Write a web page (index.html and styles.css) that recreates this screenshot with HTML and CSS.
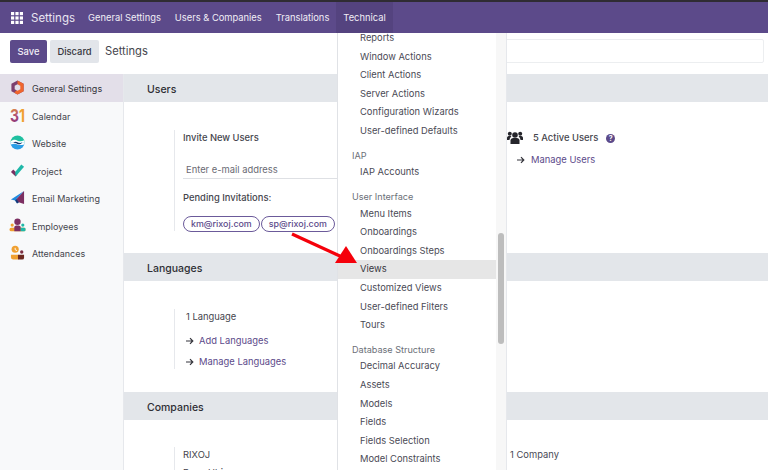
FILE: index.html
```html
<!DOCTYPE html>
<html lang="en">
<head>
<meta charset="utf-8">
<title>Settings</title>
<link rel="stylesheet" href="styles.css">
</head>
<body>
<div class="topstrip"></div>
<header class="navbar">
  <svg class="apps" viewBox="0 0 12 12" width="12" height="12"><g fill="#fff"><rect width="3.2" height="3.2"/><rect x="4.4" width="3.2" height="3.2"/><rect x="8.8" width="3.2" height="3.2"/><rect y="4.4" width="3.2" height="3.2"/><rect x="4.4" y="4.4" width="3.2" height="3.2"/><rect x="8.8" y="4.4" width="3.2" height="3.2"/><rect y="8.8" width="3.2" height="3.2"/><rect x="4.4" y="8.8" width="3.2" height="3.2"/><rect x="8.8" y="8.8" width="3.2" height="3.2"/></g></svg>
  <span class="brand">Settings</span>
  <nav class="menu">
    <span class="menu-item">General Settings</span>
    <span class="menu-item">Users &amp; Companies</span>
    <span class="menu-item">Translations</span>
    <span class="menu-item active">Technical</span>
  </nav>
</header>
<div class="control">
  <button class="btn primary">Save</button>
  <button class="btn secondary">Discard</button>
  <span class="crumb">Settings</span>
  <div class="search"></div>
</div>
<div class="main">
  <aside class="side">
    <div class="app selected"><svg class="ico" viewBox="0 0 16 16"><path fill="#7c3f6e" d="M8 .5 14.5 4v8L8 15.5 1.500 12V4z"/><path fill="#f0652d" d="M8 .5 14.500 4v8L8 15.500 4.500 13.600 7 10.800 10.500 9.800V6L8 4.500z"/><path fill="#e3dfe9" d="M8 4.500 11 6.200v3.600L8 11.500 5 9.800V6.200z"/></svg><span>General Settings</span></div>
    <div class="app"><svg class="ico" viewBox="0 0 16 16"><defs><linearGradient id="cg" x1="0" y1="0" x2="0" y2="1"><stop offset="0" stop-color="#f0a030"/><stop offset=".55" stop-color="#a8477a"/><stop offset="1" stop-color="#7c2f72"/></linearGradient></defs><text x="0" y="15" class="cal" textLength="16" lengthAdjust="spacingAndGlyphs"><tspan class="three">3</tspan><tspan class="one">1</tspan></text></svg><span>Calendar</span></div>
    <div class="app"><svg class="ico" viewBox="0 0 16 16"><path fill="#1fc0a0" d="M.5 8a7.500 7.500 0 0 1 15 0z"/><path fill="#2a9ee6" d="M.5 8a7.500 7.500 0 0 0 15 0z"/><path fill="#fff" d="M1 6.500c3-1.800 5-1.500 7-.5s4.500 1 7-.3L15.500 8h-15z"/><path fill="#fff" d="M.5 8h15l-.5 2c-3 1-5 1-7 0s-4-1-7 .2z"/><path fill="#17396e" d="M3.500 8c1.800-1.300 3.500-1 5 0 1.300.9 2.700.9 4.500-.3-.8 2-3.200 2.800-5 1.800S4.800 8.200 3.500 8z"/></svg><span>Website</span></div>
    <div class="app"><svg class="ico" viewBox="0 0 16 16"><path fill="#7c2f62" d="M1 9.500 3.500 7 8 11.500 6 14.500z"/><path fill="#1fb8a8" d="M6 14.500 5.500 9.500 12 1.500 15 4z"/></svg><span>Project</span></div>
    <div class="app"><svg class="ico" viewBox="0 0 16 16"><path fill="#1f8ae0" d="M1 10 15 1 7 9.500 7.500 14 5.500 11.300z"/><path fill="#7c2f62" d="M15 1 15 15 7.500 12.500 7 9.500z"/><path fill="#173a78" d="M7 9.500 9.500 13.200 7.500 14.500 5.500 11.300z"/></svg><span>Email Marketing</span></div>
    <div class="app"><svg class="ico wide" viewBox="0 0 16 16"><circle cx="8" cy="4.500" r="3" fill="#7c2f62"/><circle cx="3" cy="7.600" r="1.500" fill="#f0a030"/><circle cx="13" cy="7.600" r="1.500" fill="#1fb8a8"/><rect x=".5" y="10" width="15" height="3.500" rx="1.500" fill="#f0a030"/><path fill="#7c2f62" d="M5 13.500v-4c0-1 1-1.500 3-1.500s3 .5 3 1.500v4z"/><path fill="#1fb8a8" d="M11 10h3.500a1 1 0 0 1 1 1v1.500a1 1 0 0 1-1 1H11z"/></svg><span>Employees</span></div>
    <div class="app"><svg class="ico" viewBox="0 0 16 16"><circle cx="5.500" cy="4.500" r="3.800" fill="#f0a030"/><path d="M5.500 3v2l2 1" stroke="#fff" stroke-width="1" fill="none"/><circle cx="12.500" cy="7.500" r="1.800" fill="#7c2f42"/><path fill="#f0a030" d="M1 10.500h8v5H3.500A2.500 2.500 0 0 1 1 13z"/><path fill="#6d2a20" d="M8.500 10.500H15v3a2 2 0 0 1-2 2H8.500z"/></svg><span>Attendances</span></div>
  </aside>
  <section class="content">
    <h2 class="band">Users</h2>
    <div class="pane users">
      <div class="box">
        <div class="strong">Invite New Users</div>
        <div class="input">Enter e-mail address</div>
        <div class="strong pending">Pending Invitations:</div>
        <div class="chips"><span class="chip">km@rixoj.com</span><span class="chip">sp@rixoj.com</span></div>
      </div>
      <div class="right">
        <div class="active-users"><svg class="people" viewBox="0 0 16 14" width="16" height="14"><g fill="#25252b"><circle cx="8" cy="4" r="2.800"/><circle cx="2.800" cy="2.800" r="2"/><circle cx="13.200" cy="2.800" r="2"/><path d="M3.500 13V9.500C3.500 7.500 5 7 8 7s4.500.5 4.500 2.500V13z"/><path d="M0 9V7c0-1.500 1-2 2.800-2 .7 0 1.200.1 1.600.4C3.200 6.500 2.600 7.500 2.500 9z"/><path d="M16 9V7c0-1.500-1-2-2.800-2-.7 0-1.200.1-1.600.4 1.200 1.100 1.800 2.100 1.900 3.600z"/></g></svg><span>5 Active Users</span><span class="help">?</span></div>
        <div class="link manage"><svg class="go" viewBox="0 0 8 8" width="8" height="8"><path d="M0 4h6.500M4 1.200 6.800 4 4 6.800" fill="none" stroke="#35353c" stroke-width="1.200"/></svg><span>Manage Users</span></div>
      </div>
    </div>
    <h2 class="band">Languages</h2>
    <div class="pane langs">
      <div class="box">
        <div class="plain">1 Language</div>
        <div class="link add"><svg class="go" viewBox="0 0 8 8" width="8" height="8"><path d="M0 4h6.500M4 1.200 6.800 4 4 6.800" fill="none" stroke="#35353c" stroke-width="1.200"/></svg><span>Add Languages</span></div>
        <div class="link mng"><svg class="go" viewBox="0 0 8 8" width="8" height="8"><path d="M0 4h6.500M4 1.200 6.800 4 4 6.800" fill="none" stroke="#35353c" stroke-width="1.200"/></svg><span>Manage Languages</span></div>
      </div>
    </div>
    <h2 class="band">Companies</h2>
    <div class="pane comps">
      <div class="box">
        <div class="plain">RIXOJ</div>
        <div class="plain addr">Desa Ubiung</div>
      </div>
      <div class="right co">1 Company</div>
    </div>
  </section>
</div>
<div class="dropdown">
  <div class="dd-inner">
    <div class="dd-item">Reports</div>
    <div class="dd-item">Window Actions</div>
    <div class="dd-item">Client Actions</div>
    <div class="dd-item">Server Actions</div>
    <div class="dd-item">Configuration Wizards</div>
    <div class="dd-item">User-defined Defaults</div>
    <div class="dd-head">IAP</div>
    <div class="dd-item">IAP Accounts</div>
    <div class="dd-head">User Interface</div>
    <div class="dd-item">Menu Items</div>
    <div class="dd-item">Onboardings</div>
    <div class="dd-item">Onboardings Steps</div>
    <div class="dd-item hover">Views</div>
    <div class="dd-item">Customized Views</div>
    <div class="dd-item">User-defined Filters</div>
    <div class="dd-item">Tours</div>
    <div class="dd-head">Database Structure</div>
    <div class="dd-item">Decimal Accuracy</div>
    <div class="dd-item">Assets</div>
    <div class="dd-item">Models</div>
    <div class="dd-item">Fields</div>
    <div class="dd-item">Fields Selection</div>
    <div class="dd-item">Model Constraints</div>
  </div>
  <div class="track"><div class="thumb"></div></div>
</div>
<svg class="arrow" viewBox="0 0 70 34" width="70" height="34"><path d="M2 2 52 25" stroke="#f5000a" stroke-width="3.200" fill="none"/><path d="M67 31 45 31 56 14z" fill="#f5000a"/></svg>
</body>
</html>
```
FILE: styles.css
```css
* { box-sizing: border-box; }
html, body { margin: 0; height: 100%; overflow: hidden; }
body { width: 768px; height: 470px; background: #fff; font-family: Inter, "Liberation Sans", sans-serif; font-size: 9.400px; color: #4a4a55; position: relative; }
.topstrip { position: relative; z-index: 3; height: 2px; background: #2f2c33; }
.navbar { position: relative; z-index: 3; height: 31px; background: #5c4a8a; display: flex; align-items: center; color: #f1eef6; padding-left: 11px; }
.apps { flex: none; }
.brand { font-size: 11.500px; margin-left: 8px; width: 50px; color: #e9e5f1; }
.menu { display: flex; align-self: stretch; }
.menu-item { display: flex; align-items: center; padding: 0 7px; font-size: 9.350px; }
.active { background: #54437f; }
.control { height: 41px; display: flex; align-items: flex-start; padding: 6px 4px 0 10px; background: #fff; }
.btn { font: 500 9.400px Inter, "Liberation Sans", sans-serif; margin-top: 1px; height: 23px; border: 0; border-radius: 2px; padding: 0; }
.primary { width: 37px; background: #5c4a8a; color: #f1eef6; }
.secondary { width: 49px; margin-left: 3px; background: #e2e5ea; color: #35353c; }
.crumb { font-size: 11.200px; margin-left: 6px; margin-top: 5px; color: #45454d; }
.search { margin-left: auto; width: 284px; height: 24px; border: 1px solid #eceef0; border-radius: 2px; }
.main { height: 396px; display: flex; overflow: hidden; }
.side { width: 124px; background: #f8f9fa; border-right: 1px solid #e6e8ec; flex: none; height: 100%; }
.app { height: 27.500px; display: flex; align-items: center; padding-left: 10px; color: #45454d; font-size: 9px; }
.app span { margin-left: 7px; padding-top: 2px; }
.selected { background: #e3dfe9; color: #35353c; }
.ico { width: 15px; height: 15px; flex: none; overflow: visible; }
.ico.wide { width: 17px; height: 17px; margin-left: -1px; margin-right: -1px; }
.cal { font: 700 19px Inter, "Liberation Sans", sans-serif; }
.three { fill: url(#cg); }
.one { fill: #f0a030; }
.content { flex: 1; min-width: 0; }
.band { margin: 0; height: 28px; background: #e3e6ea; font-size: 10.500px; font-weight: 500; color: #2f2f35; display: flex; align-items: center; padding: 2px 0 0 23px; }
.pane { display: flex; position: relative; }
.users { height: 151px; padding-top: 28px; }
.langs { height: 111px; padding-top: 28px; }
.comps { padding-top: 27px; }
.box { width: 220px; margin-left: 50px; padding: 1px 0 0 8px; border-left: 1px solid #e6e8ec; height: 101px; color: #45454d; }
.langs .box { height: 60px; padding-left: 11px; }
.strong { font-weight: 500; color: #45454d; line-height: 14px; }
.plain { line-height: 14px; }
.addr { margin-top: 4px; }
.input { margin-top: 17px; height: 17px; line-height: 16px; padding-left: 3px; border-bottom: 1px solid #dee0e4; color: #6a6a73; width: 160px; }
.pending { margin-top: 12px; }
.chips { display: flex; margin-top: 11px; gap: 1px; }
.chip { height: 16px; border: 1px solid #6b5a9a; border-radius: 9px; font-size: 8.900px; line-height: 14px; padding: 0 7px; color: #5c4a8a; font-weight: 500; white-space: nowrap; }
.right { position: absolute; left: 383px; top: 29px; }
.active-users { display: flex; align-items: center; color: #45454d; font-weight: 500; line-height: 14px; }
.people { margin-right: 10px; }
.help { width: 9px; height: 9px; margin-left: 8px; background: #5c4a8a; color: #fff; border-radius: 50%; font-size: 7px; font-weight: 700; line-height: 9px; text-align: center; }
.link { display: flex; align-items: center; color: #35353c; line-height: 14px; }
.go { flex: none; }
.link span { color: #5c4a8a; margin-left: 5px; }
.manage { margin: 8px 0 0 10px; }
.manage span { margin-left: 6px; }
.add { margin-top: 10px; }
.mng { margin-top: 7px; }
.co { left: 386px; top: 28px; line-height: 14px; }
.dropdown { position: absolute; z-index: 2; left: 337px; top: 33px; width: 170px; height: 437px; overflow: hidden; background: #fff; border-left: 1px solid #e0e2e6; border-right: 1px solid #e6e8ec; display: flex; }
.dd-inner { width: 158px; margin-top: -3.900px; flex: none; }
.dd-item { height: 18.600px; line-height: 18.600px; padding-left: 22px; font-size: 9.350px; color: #4a4a55; white-space: nowrap; }
.dd-head { height: 22.700px; line-height: 29px; padding-left: 14px; font-size: 9.100px; color: #6c6f78; white-space: nowrap; }
.hover { background: #e6e6e6; color: #35353c; }
.track { flex: 1; background: #f7f7f7; position: relative; }
.thumb { position: absolute; left: 2px; top: 200px; width: 6px; height: 111px; border-radius: 3px; background: #bdbdbd; }
.arrow { position: absolute; z-index: 4; left: 290px; top: 232px; }
```
